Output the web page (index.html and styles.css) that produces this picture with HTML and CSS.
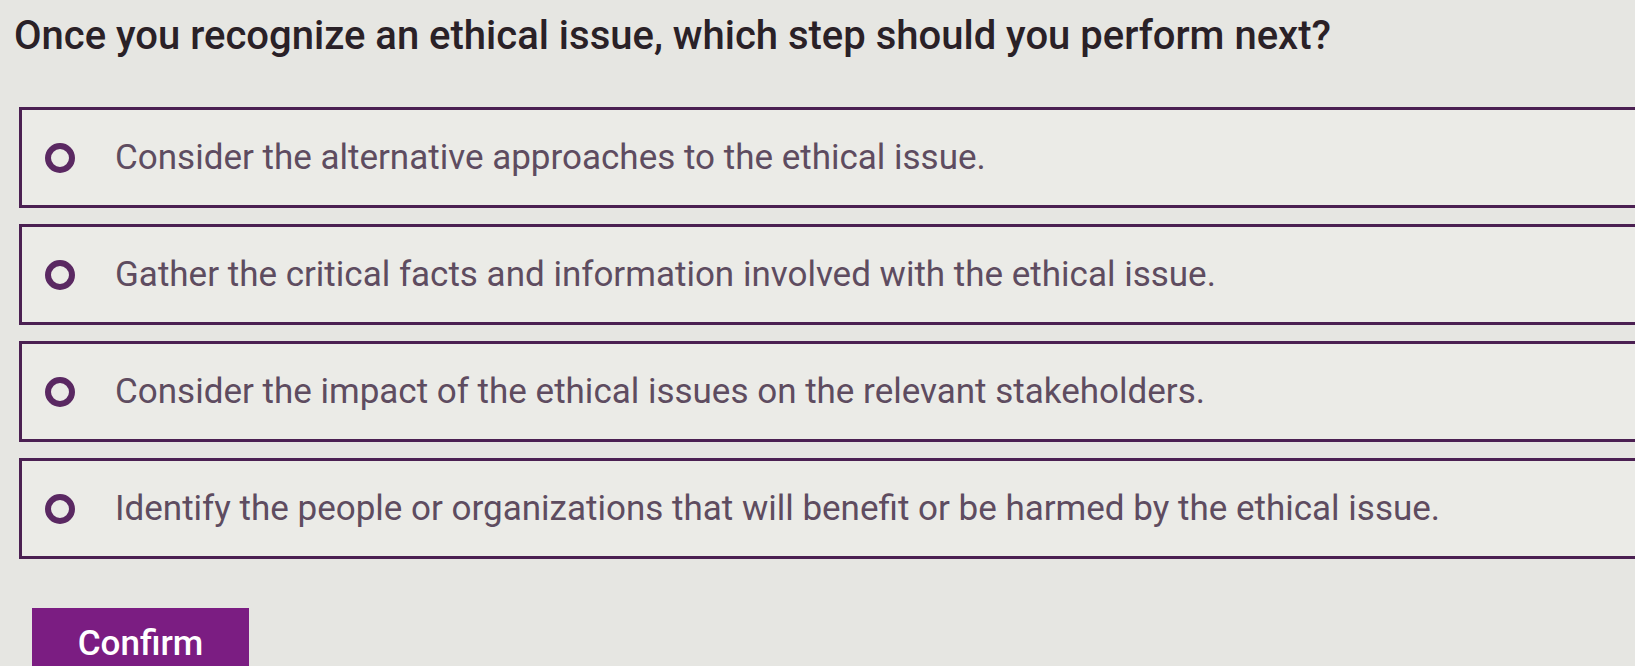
FILE: index.html
```html
<!DOCTYPE html>
<html>
<head>
<meta charset="utf-8">
<link rel="stylesheet" href="styles.css">
</head>
<body>
<div class="page">
  <h1 class="question">Once you recognize an ethical issue, which step should you perform next?</h1>
  <div class="options">
    <label class="option"><span class="radio"></span><span class="text">Consider the alternative approaches to the ethical issue.</span></label>
    <label class="option"><span class="radio"></span><span class="text">Gather the critical facts and information involved with the ethical issue.</span></label>
    <label class="option"><span class="radio"></span><span class="text">Consider the impact of the ethical issues on the relevant stakeholders.</span></label>
    <label class="option"><span class="radio"></span><span class="text">Identify the people or organizations that will benefit or be harmed by the ethical issue.</span></label>
  </div>
  <button class="confirm">Confirm</button>
</div>
</body>
</html>
```

FILE: styles.css
```css
html, body {
  margin: 0;
  padding: 0;
  background: #e6e6e2;
  overflow: hidden;
  height: 666px;
}
.page {
  font-family: Roboto, "Liberation Sans", sans-serif;
  padding: 12px 0 0 14px;
  width: 1700px;
}
.question {
  margin: 0;
  font-size: 40px;
  font-weight: 500;
  color: #2a2127;
  line-height: 48px;
}
.options {
  margin-top: 47px;
  margin-left: 5px;
  display: flex;
  flex-direction: column;
  gap: 16px;
}
.option {
  display: flex;
  align-items: center;
  height: 95px;
  border: 3px solid #4b2052;
  background: #ebebe7;
  padding-left: 23px;
}
.radio {
  flex: none;
  width: 18px;
  height: 18px;
  border: 6px solid #5a2862;
  border-radius: 50%;
  margin-right: 40px;
}
.text {
  font-size: 35px;
  color: #5e4c60;
}
.confirm {
  margin-top: 49px;
  margin-left: 18px;
  width: 217px;
  height: 90px;
  border: none;
  background: #7b1d82;
  color: #ffffff;
  font-family: Roboto, "Liberation Sans", sans-serif;
  font-size: 35px;
  font-weight: 500;
  line-height: 40px;
  padding: 16px 0 0 0;
  display: flex;
  align-items: flex-start;
  justify-content: center;
}
```
